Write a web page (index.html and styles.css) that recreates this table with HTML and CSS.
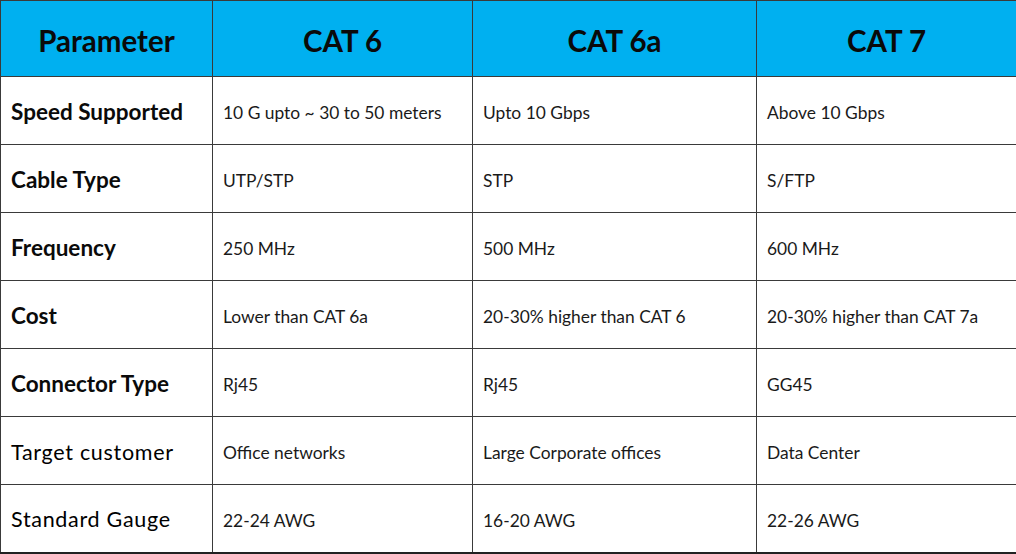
FILE: index.html
```html
<!DOCTYPE html>
<html>
<head>
<meta charset="utf-8">
<link rel="stylesheet" href="styles.css">
</head>
<body>
<table class="spec">
  <colgroup>
    <col class="c1"><col class="c2"><col class="c3"><col class="c4">
  </colgroup>
  <thead>
    <tr>
      <th>Parameter</th>
      <th>CAT 6</th>
      <th>CAT 6a</th>
      <th>CAT 7</th>
    </tr>
  </thead>
  <tbody>
    <tr><td class="name">Speed Supported</td><td>10 G upto ~ 30 to 50 meters</td><td>Upto 10 Gbps</td><td>Above 10 Gbps</td></tr>
    <tr><td class="name">Cable Type</td><td>UTP/STP</td><td>STP</td><td>S/FTP</td></tr>
    <tr><td class="name">Frequency</td><td>250 MHz</td><td>500 MHz</td><td>600 MHz</td></tr>
    <tr><td class="name">Cost</td><td>Lower than CAT 6a</td><td>20-30% higher than CAT 6</td><td>20-30% higher than CAT 7a</td></tr>
    <tr><td class="name">Connector Type</td><td>Rj45</td><td>Rj45</td><td>GG45</td></tr>
    <tr><td class="name light">Target customer</td><td>Office networks</td><td>Large Corporate offices</td><td>Data Center</td></tr>
    <tr><td class="name light">Standard Gauge</td><td>22-24 AWG</td><td>16-20 AWG</td><td>22-26 AWG</td></tr>
  </tbody>
</table>
</body>
</html>
```

FILE: styles.css
```css
html, body {
  margin: 0;
  padding: 0;
  background: #ffffff;
}

.spec {
  border-collapse: collapse;
  width: 1016px;
  table-layout: fixed;
  font-family: "Lato", "Open Sans", sans-serif;
  color: #111;
}

.c1 { width: 212px; }
.c2 { width: 260px; }
.c3 { width: 284px; }
.c4 { width: 260px; }

.spec thead tr { height: 76px; }
.spec tbody tr { height: 68px; }

.spec th,
.spec td {
  border: 1px solid #3a3a3a;
  text-align: left;
  vertical-align: middle;
  box-sizing: border-box;
}

.spec th {
  background: #00b0f0;
  font-size: 29.5px;
  font-weight: 700;
  text-align: center;
  padding: 3px 0 0 0;
  color: #0a0a0a;
}

.spec td {
  font-size: 17.4px;
  padding: 4px 0 0 10px;
  color: #1a1a1a;
}

.spec td.name {
  font-size: 22.5px;
  font-weight: 700;
  padding: 2px 0 0 10px;
  color: #0a0a0a;
}

.spec td.name.light {
  font-size: 21.5px;
  font-weight: 400;
  letter-spacing: 0.7px;
  color: #000;
}

.spec tbody tr:last-child td {
  border-bottom: 2px solid #222;
}
```
